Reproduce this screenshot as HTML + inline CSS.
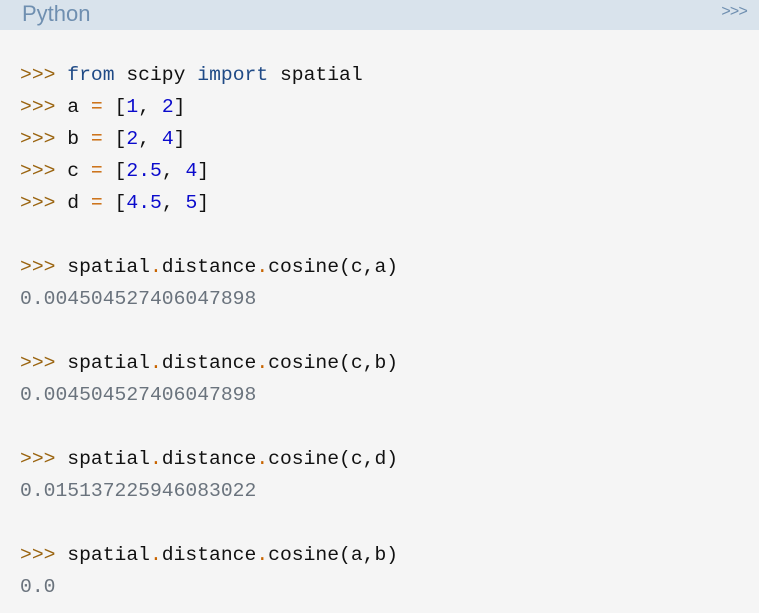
<!DOCTYPE html>
<html><head><meta charset="utf-8"><style>
html,body{margin:0;padding:0;background:#f5f5f5;width:759px;height:613px;overflow:hidden}
.hd{position:absolute;left:0;top:0;width:759px;height:30px;background:#d9e3ec}
.hd .t{position:absolute;left:22px;top:1px;line-height:26px;font:22px "Liberation Sans",sans-serif;color:#6f8fb0}
.hd .r{position:absolute;right:12px;top:3px;line-height:20px;font:16px "Liberation Mono",monospace;color:#6f8fb0;letter-spacing:-1px}
pre{position:absolute;left:20px;top:51px;margin:0;font:19.7px/32px "Liberation Mono",monospace;color:#111}
.p{color:#9a6410}.k{color:#1f4a86}.n{color:#0a0acc}.o{color:#c86400}.g{color:#6a737d}
</style></head><body>
<div class="hd"><span class="t">Python</span><span class="r">&gt;&gt;&gt;</span></div>
<pre style="top:59px"><span class="p">&gt;&gt;&gt;</span> <span class="k">from</span> scipy <span class="k">import</span> spatial
<span class="p">&gt;&gt;&gt;</span> a <span class="o">=</span> [<span class="n">1</span>, <span class="n">2</span>]
<span class="p">&gt;&gt;&gt;</span> b <span class="o">=</span> [<span class="n">2</span>, <span class="n">4</span>]
<span class="p">&gt;&gt;&gt;</span> c <span class="o">=</span> [<span class="n">2.5</span>, <span class="n">4</span>]
<span class="p">&gt;&gt;&gt;</span> d <span class="o">=</span> [<span class="n">4.5</span>, <span class="n">5</span>]

<span class="p">&gt;&gt;&gt;</span> spatial<span class="o">.</span>distance<span class="o">.</span>cosine(c,a)
<span class="g">0.004504527406047898</span>

<span class="p">&gt;&gt;&gt;</span> spatial<span class="o">.</span>distance<span class="o">.</span>cosine(c,b)
<span class="g">0.004504527406047898</span>

<span class="p">&gt;&gt;&gt;</span> spatial<span class="o">.</span>distance<span class="o">.</span>cosine(c,d)
<span class="g">0.015137225946083022</span>

<span class="p">&gt;&gt;&gt;</span> spatial<span class="o">.</span>distance<span class="o">.</span>cosine(a,b)
<span class="g">0.0</span></pre>
</body></html>
